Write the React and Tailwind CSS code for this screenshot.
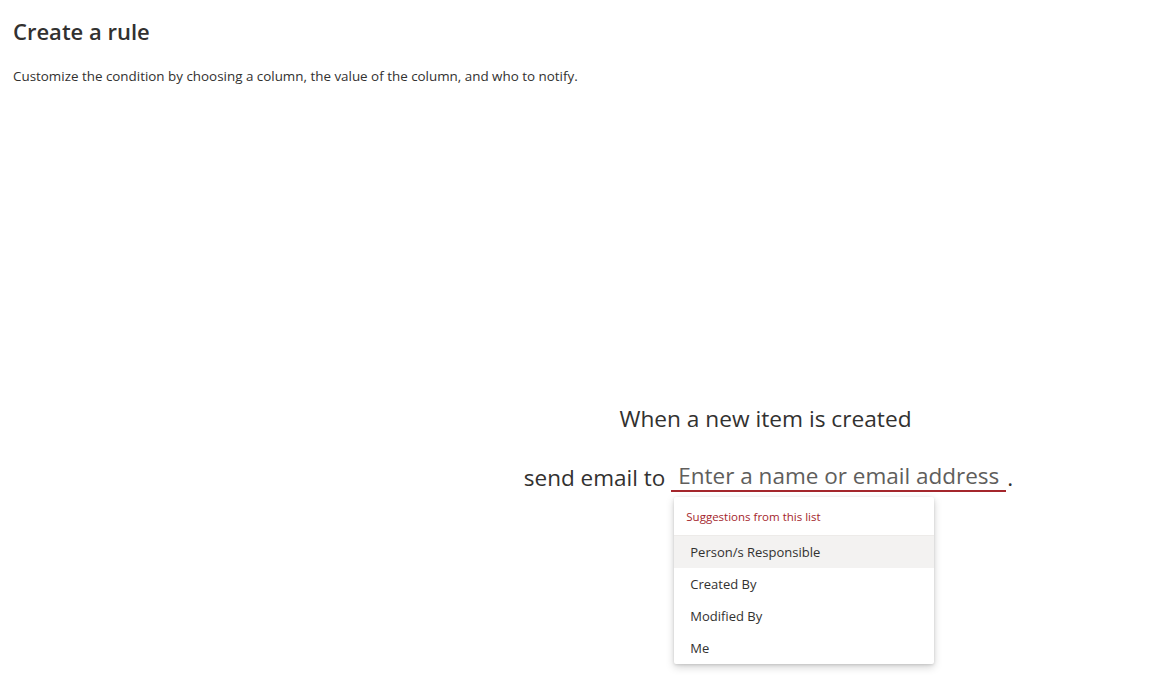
import React from "react";

const items = ["Person/s Responsible", "Created By", "Modified By", "Me"];

export default function App() {
  return (
    <div
      className="min-h-[678px] bg-white text-[#323130]"
      style={{ fontFamily: '"Open Sans", "Noto Sans", sans-serif' }}
    >
      {/* Header */}
      <div className="px-[13px] pt-[15px]">
        <h1 className="text-[22px] font-semibold leading-[32px] text-[#323130]">Create a rule</h1>
        <p className="mt-[21px] text-[13.4px] leading-[16px] text-[#323130]">
          Customize the condition by choosing a column, the value of the column, and who to notify.
        </p>
      </div>

      {/* Rule sentence */}
      <div className="pl-[364px] mt-[320px] flex flex-col items-center">
        <div className="text-[22.7px] leading-[30px] text-[#323130] -translate-x-[3px]">When a new item is created</div>

        <div className="mt-[27px] flex items-end text-[22.5px] leading-[29px]">
          <span className="mr-[6px]">send email to</span>
          <div className="relative">
            <div className="border-b-2 border-[#a4262c] px-[7px] text-[#605e5c]">
              Enter a name or email address
            </div>

            {/* Suggestions */}
            <div className="absolute left-[3px] top-[36px] w-[260px] bg-white shadow-[0_3px_8px_rgba(0,0,0,0.18),0_1px_3px_rgba(0,0,0,0.12)] rounded-[2px]">
              <div className="h-[39px] px-[12px] flex items-center text-[11.5px] text-[#a4262c] border-b border-[#edebe9]">
                Suggestions from this list
              </div>
              {items.map((it, i) => (
                <div
                  key={it}
                  className={`h-[32px] px-[16px] flex items-center text-[13px] text-[#323130] ${
                    i === 0 ? "bg-[#f3f2f1]" : ""
                  }`}
                >
                  {it}
                </div>
              ))}
            </div>
          </div>
          <span className="ml-[1px]">.</span>
        </div>
      </div>
    </div>
  );
}
